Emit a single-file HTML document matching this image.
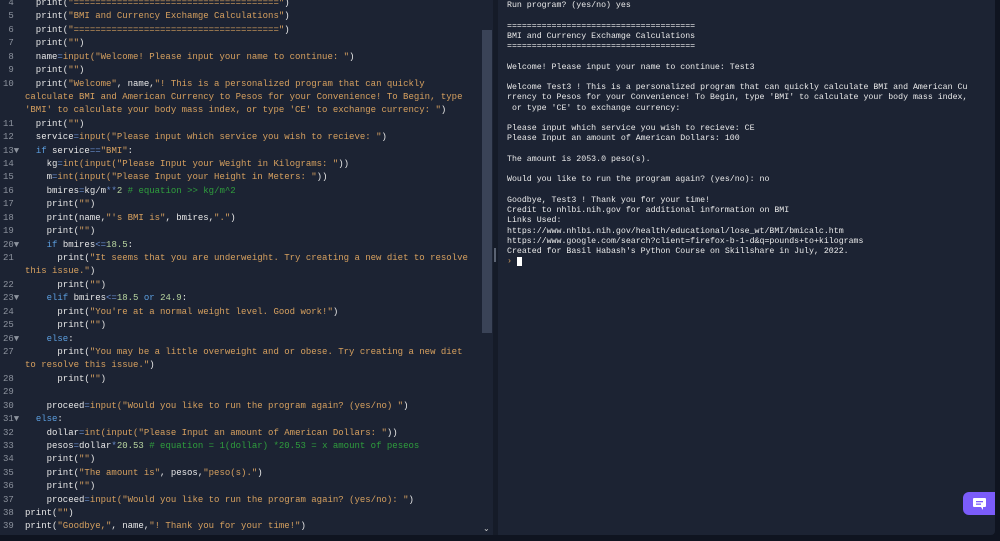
<!DOCTYPE html>
<html><head><style>
html,body{margin:0;padding:0;width:1000px;height:541px;overflow:hidden;background:#0f1420;}
.ed{position:absolute;left:0;top:0;width:493px;height:535px;background:#1c2333;overflow:hidden;}
.con{position:absolute;left:498px;top:0;width:497px;height:535px;background:#1c2333;border-radius:0 0 4px 0;overflow:hidden;}
.div{position:absolute;left:493px;top:0;width:5px;height:535px;background:#151b28;}
.div i{position:absolute;left:1px;top:248px;width:2px;height:14px;background:#5a6272;}
pre{margin:0;font-family:"Liberation Mono",monospace;white-space:pre;}
.code{position:absolute;left:25px;top:-3px;font-size:9px;line-height:13.42px;color:#e8e8e8;}
.ln{position:absolute;left:3px;top:-3px;font-size:9px;line-height:13.42px;color:#8d939e;width:20px;}
.s{color:#d6a05f}.k{color:#5c9fe0}.n{color:#b9d6a0}.c{color:#2f9e3d}.o{color:#6a8fd0}
.out{position:absolute;left:9px;top:1px;font-size:8.25px;line-height:10.25px;color:#eaeaea;}
.sb{position:absolute;left:482px;top:30px;width:10px;height:303px;background:#3a4357;}
.bar{position:absolute;left:963px;top:492px;width:32px;height:23px;background:#7b5cfa;border-radius:6px 0 0 6px;}
</style></head><body>
<div class="ed">
<pre class="ln"> 4
 5
 6
 7
 8
 9
10


11
12
13▼
14
15
16
17
18
19
20▼
21

22
23▼
24
25
26▼
27

28
29
30
31▼
32
33
34
35
36
37
38
39</pre>
<pre class="code">  <span>print(</span><span class="s">"======================================"</span>)
  print(<span class="s">"BMI and Currency Exchamge Calculations"</span>)
  print(<span class="s">"======================================"</span>)
  print(<span class="s">""</span>)
  name<span class="o">=</span><span class="s">input(</span><span class="s">"Welcome! Please input your name to continue: "</span>)
  print(<span class="s">""</span>)
  print(<span class="s">"Welcome"</span>, name,<span class="s">"! This is a personalized program that can quickly</span>
<span class="s">calculate BMI and American Currency to Pesos for your Convenience! To Begin, type</span>
<span class="s">'BMI' to calculate your body mass index, or type 'CE' to exchange currency: "</span>)
  print(<span class="s">""</span>)
  service<span class="o">=</span><span class="s">input(</span><span class="s">"Please input which service you wish to recieve: "</span>)
  <span class="k">if</span> service<span class="o">==</span><span class="s">"BMI"</span>:
    kg<span class="o">=</span><span class="s">int(input(</span><span class="s">"Please Input your Weight in Kilograms: "</span>))
    m<span class="o">=</span><span class="s">int(input(</span><span class="s">"Please Input your Height in Meters: "</span>))
    bmires<span class="o">=</span>kg/m<span class="o">**</span><span class="n">2</span> <span class="c"># equation &gt;&gt; kg/m^2</span>
    print(<span class="s">""</span>)
    print(name,<span class="s">"'s BMI is"</span>, bmires,<span class="s">"."</span>)
    print(<span class="s">""</span>)
    <span class="k">if</span> bmires<span class="o">&lt;=</span><span class="n">18.5</span>:
      print(<span class="s">"It seems that you are underweight. Try creating a new diet to resolve</span>
<span class="s">this issue."</span>)
      print(<span class="s">""</span>)
    <span class="k">elif</span> bmires<span class="o">&lt;=</span><span class="n">18.5</span> <span class="k">or</span> <span class="n">24.9</span>:
      print(<span class="s">"You're at a normal weight level. Good work!"</span>)
      print(<span class="s">""</span>)
    <span class="k">else</span>:
      print(<span class="s">"You may be a little overweight and or obese. Try creating a new diet</span>
<span class="s">to resolve this issue."</span>)
      print(<span class="s">""</span>)

    proceed<span class="o">=</span><span class="s">input(</span><span class="s">"Would you like to run the program again? (yes/no) "</span>)
  <span class="k">else</span>:
    dollar<span class="o">=</span><span class="s">int(input(</span><span class="s">"Please Input an amount of American Dollars: "</span>))
    pesos<span class="o">=</span>dollar<span class="o">*</span><span class="n">20.53</span> <span class="c"># equation = 1(dollar) *20.53 = x amount of peseos</span>
    print(<span class="s">""</span>)
    print(<span class="s">"The amount is"</span>, pesos,<span class="s">"peso(s)."</span>)
    print(<span class="s">""</span>)
    proceed<span class="o">=</span><span class="s">input(</span><span class="s">"Would you like to run the program again? (yes/no): "</span>)
print(<span class="s">""</span>)
print(<span class="s">"Goodbye,"</span>, name,<span class="s">"! Thank you for your time!"</span>)</pre>
<div class="sb"></div>
<div style="position:absolute;left:483px;top:524px;color:#ccc;font:8px 'Liberation Sans',sans-serif;">⌄</div>
</div>
<div class="div"><i></i></div>
<div class="con">
<pre class="out">Run program? (yes/no) yes

======================================
BMI and Currency Exchamge Calculations
======================================

Welcome! Please input your name to continue: Test3

Welcome Test3 ! This is a personalized program that can quickly calculate BMI and American Cu
rrency to Pesos for your Convenience! To Begin, type 'BMI' to calculate your body mass index,
 or type 'CE' to exchange currency:

Please input which service you wish to recieve: CE
Please Input an amount of American Dollars: 100

The amount is 2053.0 peso(s).

Would you like to run the program again? (yes/no): no

Goodbye, Test3 ! Thank you for your time!
Credit to nhlbi.nih.gov for additional information on BMI
Links Used:
https://www.nhlbi.nih.gov/health/educational/lose_wt/BMI/bmicalc.htm
https://www.google.com/search?client=firefox-b-1-d&amp;q=pounds+to+kilograms
Created for Basil Habash's Python Course on Skillshare in July, 2022.
<span style="color:#d6a05f">›</span> <span style="background:#fff">&#160;</span></pre>
</div>
<div class="bar"><svg width="32" height="23"><rect x="10" y="6" width="13" height="9" rx="1" fill="#fff"/><path d="M18 15 L20 18 L20 15Z" fill="#fff"/><rect x="13" y="9" width="7" height="1.3" fill="#7b5cfa"/><rect x="13" y="11.5" width="5" height="1.3" fill="#7b5cfa"/></svg></div>
</body></html>
